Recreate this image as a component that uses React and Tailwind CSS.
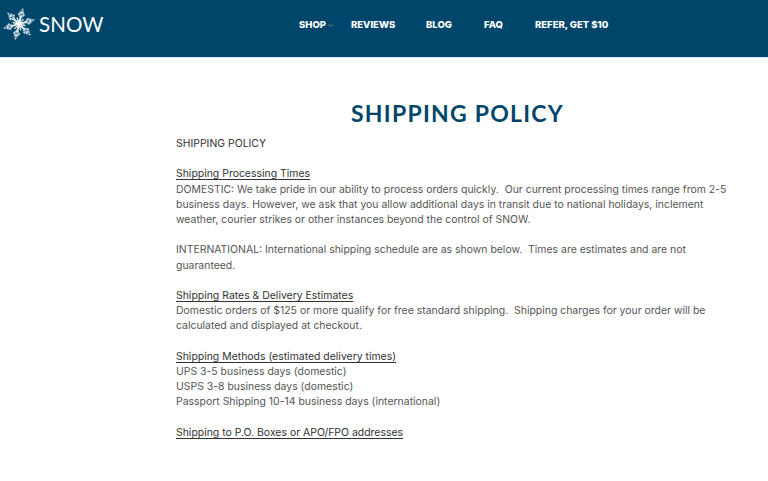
import React from 'react';
import { ChevronDown } from 'lucide-react';

const Snowflake = () => (
    <svg width="34" height="34" viewBox="-17 -17 34 34" className="shrink-0">
        {[14, 74, 134, 194, 254, 314].map(angle => (
            <g key={angle} transform={`rotate(${angle})`}>
                <path d="M0 0V-7" stroke="#ffffff" strokeWidth="1.8" />
                <path d="M0 -5.5L3.6 -9.5L0 -16.5L-3.6 -9.5Z" fill="#e6eef2" opacity="0.9" />
                <path d="M-2.6 -8L2.6 -11.4M2.6 -8L-2.6 -11.4M-1.8 -12.4L1.8 -14.6M1.8 -12.4L-1.8 -14.6" stroke="#00466b" strokeWidth="0.5" />
                <path d="M0 0L3.6 -5.5M0 0L-3.6 -5.5" stroke="#ffffff" strokeWidth="0.8" />
            </g>
        ))}
    </svg>
);

const navItems = [
    { label: 'REVIEWS', cls: 'w-[75px]' },
    { label: 'BLOG', cls: 'w-[58px]' },
    { label: 'FAQ', cls: 'w-[51px]' },
    { label: 'REFER, GET $10', cls: '' },
];

const Heading = ({ children }) => (
    <p className="underline underline-offset-2 text-[#333333]">{children}</p>
);

export default function App() {
    return (
        <div className="w-[768px] h-[481px] bg-white overflow-hidden font-['Inter',sans-serif]">
            <header className="h-[58px] bg-[#00466b] flex items-start border-b border-[#dfe6ea]">
                <div className="flex items-center ml-[2px] mt-[7px] w-[297px]">
                    <Snowflake />
                    <span className="ml-[3px] text-[20.5px] leading-[32px] text-white tracking-[0.1px] font-['Lato',sans-serif]">SNOW</span>
                </div>
                <nav className="flex items-center mt-[17px] h-[16px] text-[9.5px] font-extrabold text-white">
                    <span className="w-[29px]">SHOP</span>
                    <ChevronDown className="w-[7px] h-[7px] -ml-[1px] mr-[17px] text-[#a9c0cd]" />
                    {navItems.map(item => (
                        <span key={item.label} className={item.cls}>{item.label}</span>
                    ))}
                </nav>
            </header>

            <main className="h-[384px] overflow-hidden">
                <h1 className="mt-[42px] ml-[351px] text-[23px] leading-[27px] font-bold tracking-[1.25px] text-[#00466b] font-['Lato',sans-serif]">SHIPPING POLICY</h1>
                <div className="ml-[176px] w-[554px] mt-[9px] text-[10.45px] leading-[15.2px] text-[#555555]">
                    <p className="text-[#333333]">SHIPPING POLICY</p>
                    <br />
                    <Heading>Shipping Processing Times</Heading>
                    <p>DOMESTIC: We take pride in our ability to process orders quickly.&nbsp; Our current processing times range from 2-5 business days. However, we ask that you allow additional days in transit due to national holidays, inclement weather, courier strikes or other instances beyond the control of SNOW.</p>
                    <br />
                    <p>INTERNATIONAL: International shipping schedule are as shown below.&nbsp; Times are estimates and are not guaranteed.</p>
                    <br />
                    <Heading>Shipping Rates &amp; Delivery Estimates</Heading>
                    <p>Domestic orders of $125 or more qualify for free standard shipping.&nbsp; Shipping charges for your order will be calculated and displayed at checkout.</p>
                    <br />
                    <Heading>Shipping Methods (estimated delivery times)</Heading>
                    <p>UPS 3-5 business days (domestic)</p>
                    <p>USPS 3-8 business days (domestic)</p>
                    <p>Passport Shipping 10-14 business days (international)</p>
                    <br />
                    <Heading>Shipping to P.O. Boxes or APO/FPO addresses</Heading>
                    <div className="flex h-[1px] mt-[2px] pl-[390px]">
                        <span className="w-[1px] h-[1px] bg-[#999999]" />
                        <span className="w-[1px] h-[1px] bg-[#999999] ml-[23px]" />
                    </div>
                </div>
            </main>
        </div>
    );
}
